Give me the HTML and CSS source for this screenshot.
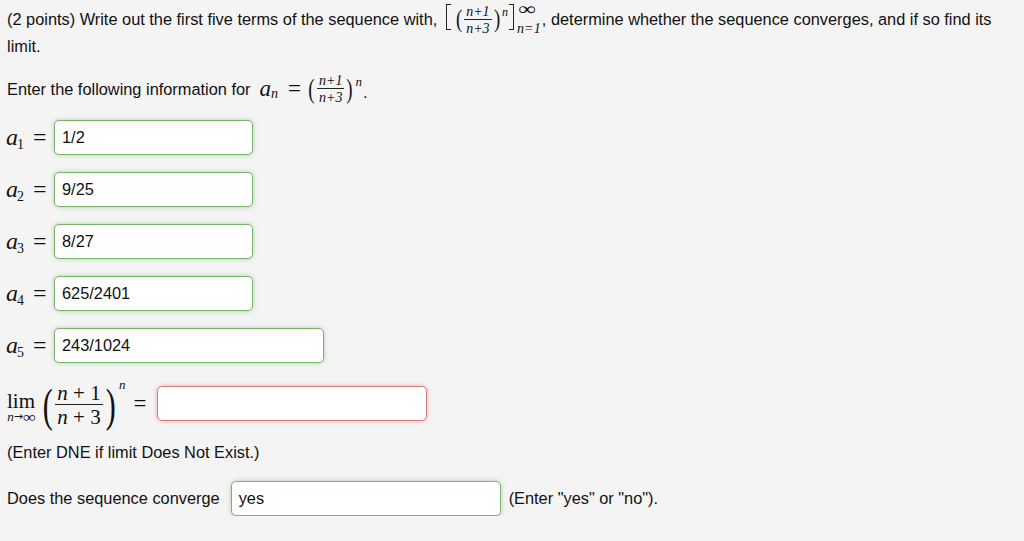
FILE: index.html
```html
<!DOCTYPE html>
<html>
<head>
<meta charset="utf-8">
<link rel="stylesheet" href="styles.css">
</head>
<body>
<div class="page">
  <p class="intro">(2 points) Write out the first five terms of the sequence with, <span class="seq"><span class="brk brl"></span><span class="sp">(</span><span class="frac sm"><span class="num">n+1</span><span class="den">n+3</span></span><span class="sp">)</span><span class="spw">n</span><span class="brk brr"></span><span class="lims"><span class="inf">∞</span><span class="low">n<span class="leq">=</span>1</span></span></span>, determine whether the sequence converges, and if so find its limit.</p>

  <div class="enter"><span>Enter the following information for</span><span class="ea">a</span><span class="esub">n</span><span class="eeq">=</span><span class="ep">(</span><span class="frac sm"><span class="num">n+1</span><span class="den">n+3</span></span><span class="ep">)</span><span class="epw">n</span><span class="edot">.</span></div>

  <div class="row"><span class="lbl"><i class="v">a</i><span class="sub">1</span><span class="eq">=</span></span><div class="inp ok">1/2</div></div>
  <div class="row"><span class="lbl"><i class="v">a</i><span class="sub">2</span><span class="eq">=</span></span><div class="inp ok">9/25</div></div>
  <div class="row"><span class="lbl"><i class="v">a</i><span class="sub">3</span><span class="eq">=</span></span><div class="inp ok">8/27</div></div>
  <div class="row"><span class="lbl"><i class="v">a</i><span class="sub">4</span><span class="eq">=</span></span><div class="inp ok">625/2401</div></div>
  <div class="row"><span class="lbl"><i class="v">a</i><span class="sub">5</span><span class="eq">=</span></span><div class="inp ok wide">243/1024</div></div>

  <div class="row limrow">
    <span class="limlbl">
      <span class="limop"><span class="lim">lim</span><span class="under"><i>n</i><span class="arr">→</span><span class="uinf">∞</span></span></span>
      <span class="bigpar">(</span>
      <span class="frac big"><span class="num"><i>n</i> + 1</span><span class="den"><i>n</i> + 3</span></span>
      <span class="bigpar">)</span>
      <span class="pw3">n</span>
      <span class="eq2">=</span>
    </span>
    <div class="inp bad wide"></div>
  </div>

  <p class="dne">(Enter DNE if limit Does Not Exist.)</p>

  <div class="conv">
    <span>Does the sequence converge</span>
    <div class="inp ok wide">yes</div>
    <span>(Enter "yes" or "no").</span>
  </div>
</div>
</body>
</html>
```
FILE: styles.css
```css
html, body {
  margin: 0;
  padding: 0;
  background: #f4f4f4;
}
.page {
  font-family: "Liberation Sans", Arial, sans-serif;
  font-size: 16.35px;
  color: #111;
  padding: 6px 7px 0 7px;
  width: 1010px;
}
p { margin: 0; }

/* top paragraph */
.intro {
  line-height: 27px;
}
.seq {
  display: inline-flex;
  align-items: center;
  vertical-align: top;
  height: 27px;
  margin-left: 4px;
  margin-right: 1px;
  font-family: "Liberation Serif", "Times New Roman", serif;
}
.brk {
  display: inline-block;
  width: 5px;
  height: 26px;
  border-top: 1.3px solid #222;
  border-bottom: 1.3px solid #222;
  box-sizing: border-box;
  margin-top: -5px;
}
.brl { border-left: 1.4px solid #222; margin-right: 4px; }
.brr { border-right: 1.4px solid #222; margin-left: 1px; }
.sp {
  font-size: 25px;
  line-height: 25px;
  display: inline-block;
  transform: scaleX(0.75);
  margin-top: -2px;
}
.frac {
  display: inline-flex;
  flex-direction: column;
  align-items: center;
  font-family: "Liberation Serif", "Times New Roman", serif;
}
.frac.sm {
  font-size: 14px;
  line-height: 13px;
  font-style: italic;
  margin: 0 1px;
}
.frac.sm .num { border-bottom: 1px solid #222; padding: 0 2px 1px; }
.frac.sm .den { padding-top: 2px; }
.spw {
  font-style: italic;
  font-size: 12px;
  line-height: 12px;
  align-self: flex-start;
  margin-top: 0;
  margin-left: 1px;
}
.lims {
  display: inline-flex;
  flex-direction: column;
  align-items: flex-start;
  margin-left: 3px;
  margin-top: 0;
}
.lims .inf {
  font-size: 18px;
  line-height: 12px;
  display: inline-block;
  transform: scaleX(1.35);
  transform-origin: left center;
  margin-left: 1px;
}
.lims .low { font-style: italic; font-size: 14px; line-height: 14px; margin-top: 7px; }
.leq { font-style: normal; margin: 0 1px; }

/* enter line */
.enter {
  display: flex;
  align-items: center;
  height: 32px;
  margin-top: 13px;
}
.ea {
  font-family: "Liberation Serif", serif;
  font-style: italic;
  font-size: 23px;
  margin-left: 9px;
}
.esub {
  font-family: "Liberation Serif", serif;
  font-style: italic;
  font-size: 14px;
  margin-top: 10px;
}
.eeq {
  font-family: "Liberation Serif", serif;
  font-size: 23px;
  margin: 0 6px 0 10px;
}
.ep {
  font-family: "Liberation Serif", serif;
  font-size: 27px;
  display: inline-block;
  transform: scaleX(0.7);
}
.epw {
  font-family: "Liberation Serif", serif;
  font-style: italic;
  font-size: 13px;
  align-self: flex-start;
  margin-top: 1px;
  margin-left: 1px;
}
.edot { margin-left: 1px; margin-top: 6px; }

/* rows */
.row {
  display: flex;
  align-items: center;
  margin-top: 17px;
  height: 35px;
}
.enter + .row { margin-top: 15px; }
.lbl {
  width: 48px;
  flex-shrink: 0;
  display: flex;
  align-items: baseline;
  font-family: "Liberation Serif", serif;
  margin-left: -1px;
}
.v { font-style: italic; font-size: 24px; }
.sub { font-size: 14px; position: relative; top: 4px; margin-left: -1px; }
.eq { font-size: 24px; margin-left: 9px; }
.inp {
  box-sizing: border-box;
  width: 199px;
  height: 35px;
  background: #fff;
  border-radius: 5px;
  padding: 0 7px;
  display: flex;
  align-items: center;
  color: #111;
  flex-shrink: 0;
}
.inp.wide { width: 270px; }
.inp.ok {
  border: 1px solid #7db372;
  box-shadow: 0 0 4px rgba(100, 175, 90, 0.5);
}
.inp.bad {
  border: 1px solid #d97c7c;
  box-shadow: 0 0 4px rgba(220, 100, 100, 0.5);
}

/* limit row */
.limrow { margin-top: 23px; }
.limlbl {
  width: 150px;
  height: 35px;
  flex-shrink: 0;
  display: flex;
  align-items: center;
  font-family: "Liberation Serif", serif;
}
.limop {
  display: inline-flex;
  flex-direction: column;
  align-items: center;
  margin-left: 0;
  margin-right: 5px;
  margin-top: 8px;
}
.lim { font-size: 21px; line-height: 18px; }
.under { font-size: 12px; line-height: 12px; margin-top: 1px; display: flex; align-items: center; }
.under i { font-size: 13px; }
.arr { font-family: "DejaVu Sans", sans-serif; font-size: 11px; }
.uinf { font-size: 15px; line-height: 12px; display: inline-block; transform: scaleX(1.2); margin-left: 1px; }
.bigpar {
  font-size: 46px;
  line-height: 46px;
  display: inline-block;
  transform: scaleX(0.65);
  margin-top: 4px;
}
.frac.big {
  font-size: 21px;
  line-height: 18px;
  margin: 3px 0 0;
}
.frac.big .num { border-bottom: 1px solid #222; padding: 0 2px 2px; }
.frac.big .den { padding-top: 3px; }
.pw3 { font-style: italic; font-size: 13px; align-self: flex-start; margin-top: -9px; margin-left: 1px; }
.eq2 { font-size: 23px; margin-left: 8px; }

.dne { margin-top: 22px; line-height: 18px; }
.conv {
  display: flex;
  align-items: center;
  margin-top: 20px;
}
.conv .inp { margin: 0 8px 0 11px; }
```
